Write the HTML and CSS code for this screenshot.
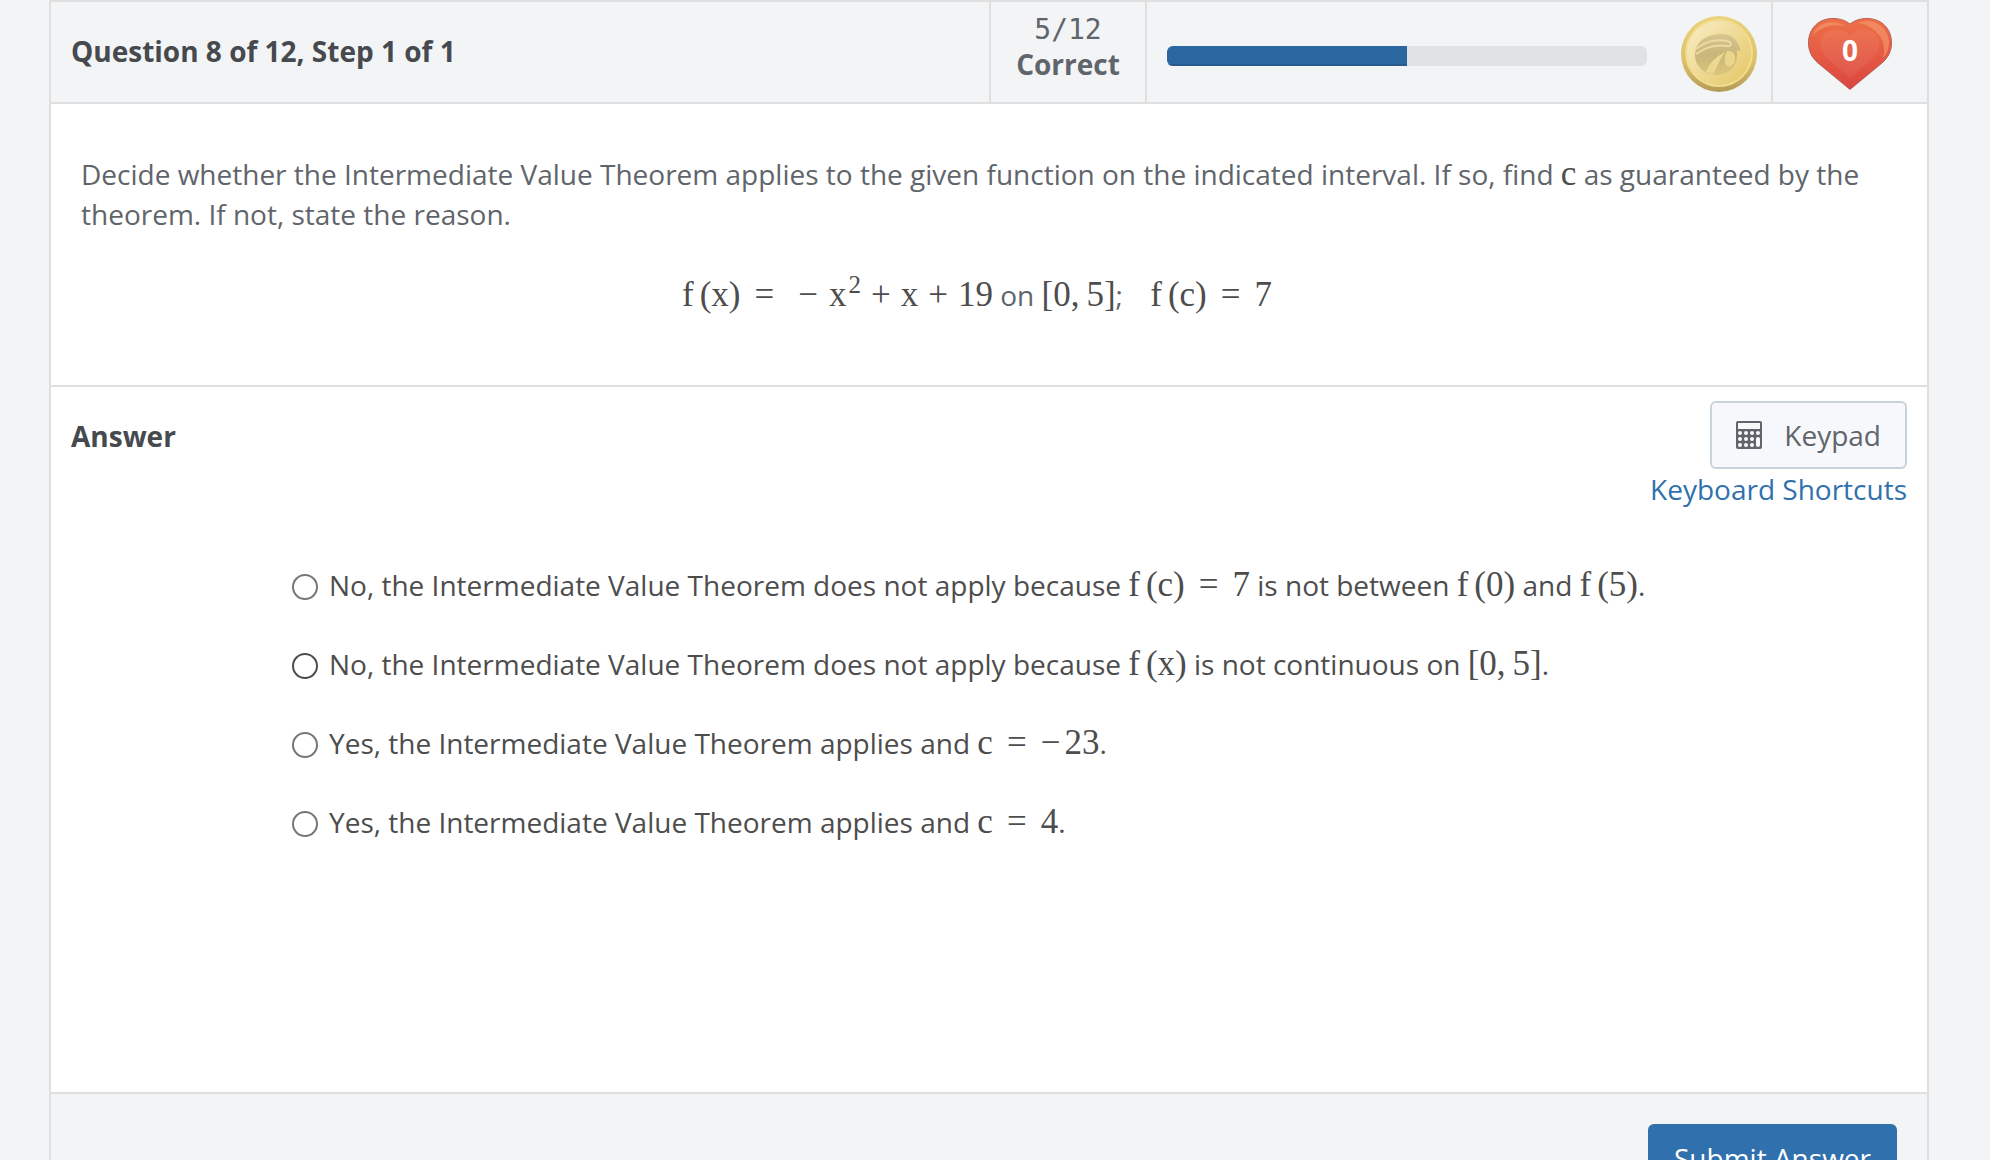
FILE: index.html
```html
<!DOCTYPE html>
<html lang="en">
<head>
    <meta charset="UTF-8">
    <meta name="viewport" content="width=device-width, initial-scale=1.0">
    <title>Question 8 of 12</title>
    <link rel="stylesheet" href="styles.css">
</head>
<body>

<main class="question-card">
    <!-- Header with score, progress and lives -->
    <header class="card-header">
        <h1 class="title">Question 8 of 12, Step 1 of 1</h1>
        <div class="score">
            <span class="score-count">5/12</span>
            <strong>Correct</strong>
        </div>
        <div class="progress-cell">
            <progress class="progress" value="50" max="100" aria-label="Progress"></progress>
            <svg class="coin" viewBox="0 0 76 76" aria-hidden="true">
                <defs>
                    <linearGradient id="coinRim" x1="0" y1="0" x2="0" y2="1">
                        <stop offset="0" stop-color="#ecd27c"/>
                        <stop offset="0.6" stop-color="#dcc06a"/>
                        <stop offset="1" stop-color="#b39c55"/>
                    </linearGradient>
                    <linearGradient id="coinFace" x1="0" y1="0" x2="1" y2="1">
                        <stop offset="0.1" stop-color="#f7eabd"/>
                        <stop offset="0.9" stop-color="#e6ca6c"/>
                    </linearGradient>
                    <linearGradient id="coinBird" x1="0" y1="0" x2="0" y2="1">
                        <stop offset="0" stop-color="#d6c690"/>
                        <stop offset="0.5" stop-color="#c8b67a"/>
                        <stop offset="1" stop-color="#dbc67c"/>
                    </linearGradient>
                </defs>
                <circle cx="38" cy="38" r="38" fill="url(#coinRim)"/>
                <circle cx="38" cy="37" r="34" fill="#f1dc8f"/>
                <circle cx="38" cy="37" r="32" fill="url(#coinFace)"/>
                <path d="M16 30C21 21 31 18 41 18C50 18 57 23 60 36C57 33 55 34 56 38C56 50 48 59 36 59C23 59 13 49 14 37Z" fill="url(#coinBird)"/>
                <path d="M15 33C25 25 35 23 46 25C51 26 51 31 46 30C34 28 25 31 15 38" fill="none" stroke="#ebdba2" stroke-width="2"/>
                <path d="M25 56C29 47 34 41 44 36C39 43 36 51 32 58Z" fill="#ecd98f"/>
                <path d="M46 35C53 34 56 40 53 47C50 52 46 52 44 47C43 42 44 38 46 35Z" fill="#ead58a"/>
            </svg>
        </div>
        <div class="lives">
            <svg class="heart" viewBox="0 0 84 72" aria-hidden="true">
                <defs>
                    <linearGradient id="heartFill" x1="0" y1="0" x2="0" y2="1">
                        <stop offset="0" stop-color="#ee7048"/>
                        <stop offset="1" stop-color="#dc4540"/>
                    </linearGradient>
                </defs>
                <path d="M42 71.500L10 45C3 39 .5 32 .5 25C.5 10 11 .5 25 .5C33 .5 38 3 42 6C46 3 51 .5 59 .5C73 .5 83.500 10 83.500 25C83.500 32 81 39 74 45Z" fill="url(#heartFill)" stroke="#b5615a" stroke-width="1"/>
                <path d="M42 60L18 39C9 29 12 15 23 12C31 10 38 13 42 18C46 13 53 10 61 12C72 15 75 29 66 39Z" fill="#fff" opacity="0.06"/>
                <path d="M50 5C66 -1 80 9 81 24C81 31 79 36 75 40C80 24 69 8 50 5Z" fill="#f6a878" opacity="0.5"/>
                <path d="M4 18C9 4 26 1 37 8C26 6 13 8 4 18Z" fill="#f6a878" opacity="0.5"/>
            </svg>
            <span class="lives-count">0</span>
        </div>
    </header>

    <!-- Question text -->
    <section class="question">
        <p class="question-text">Decide whether the Intermediate Value Theorem applies to the given function on the indicated interval. If so, find <span class="math">c</span> as guaranteed by the theorem. If not, state the reason.</p>
        <p class="formula"><span class="math"><span class="fn">f</span>(x)<span class="rel">=</span><span class="neg">−</span>x<sup>2</sup><span class="bin">+</span>x<span class="bin">+</span>19</span> on <span class="math">[0<span class="comma">,</span>5]</span>; <span class="math next"><span class="fn">f</span>(c)<span class="rel">=</span>7</span></p>
    </section>

    <!-- Answer choices -->
    <section class="answer">
        <div class="answer-head">
            <h2 class="title">Answer</h2>
            <div class="tools">
                <button type="button" class="keypad">
                    <svg class="keypad-icon" viewBox="0 0 26 28" aria-hidden="true">
                        <rect width="26" height="28" rx="2" fill="#5f656b"/>
                        <rect x="2" y="2" width="22" height="6" fill="#f7f8fa"/>
                        <g fill="#f7f8fa">
                            <circle cx="4" cy="12" r="2"/><circle cx="10" cy="12" r="2"/><circle cx="16" cy="12" r="2"/><circle cx="22" cy="12" r="2"/>
                            <circle cx="4" cy="18" r="2"/><circle cx="10" cy="18" r="2"/><circle cx="16" cy="18" r="2"/>
                            <circle cx="4" cy="24" r="2"/><circle cx="10" cy="24" r="2"/><circle cx="16" cy="24" r="2"/>
                            <rect x="20" y="16" width="4" height="10" rx="2"/>
                        </g>
                    </svg>
                    Keypad
                </button>
                <a href="#" class="shortcuts">Keyboard Shortcuts</a>
            </div>
        </div>

        <form class="options" id="answerForm">
            <div class="option">
                <input type="radio" name="answer" id="option1">
                <label for="option1">No, the Intermediate Value Theorem does not apply because <span class="math"><span class="fn">f</span>(c)<span class="rel">=</span>7</span> is not between <span class="math"><span class="fn">f</span>(0)</span> and <span class="math"><span class="fn">f</span>(5)</span>.</label>
            </div>
            <div class="option">
                <input type="radio" name="answer" id="option2" class="focused">
                <label for="option2">No, the Intermediate Value Theorem does not apply because <span class="math"><span class="fn">f</span>(x)</span> is not continuous on <span class="math">[0<span class="comma">,</span>5]</span>.</label>
            </div>
            <div class="option">
                <input type="radio" name="answer" id="option3">
                <label for="option3">Yes, the Intermediate Value Theorem applies and <span class="math">c<span class="rel">=</span><span class="sign">−</span>23</span>.</label>
            </div>
            <div class="option">
                <input type="radio" name="answer" id="option4">
                <label for="option4">Yes, the Intermediate Value Theorem applies and <span class="math">c<span class="rel">=</span>4</span>.</label>
            </div>
        </form>
    </section>

    <footer class="card-footer">
        <button type="submit" form="answerForm" class="submit">Submit Answer</button>
    </footer>
</main>

</body>
</html>
```

FILE: styles.css
```css
* {
    box-sizing: border-box;
}
body {
    margin: 0;
    background-color: #f3f4f6;
    color: #5f656b;
    font-family: 'Open Sans', sans-serif;
    font-size: 28px;
    line-height: 40px;
}
.question-card {
    margin: 0 61px 0 49px;
    border: 2px solid #dfdfdf;
    background-color: #fff;
}
.title {
    margin: 0;
    color: #46494d;
    font-size: 28px;
    font-weight: bold;
}

/* Header */
.card-header {
    display: flex;
    background-color: #f3f4f6;
    border-bottom: 2px solid #dfdfdf;
}
.card-header .title {
    width: 50%;
    padding: 29px 20px 31px;
}
.score {
    display: flex;
    flex-direction: column;
    align-items: center;
    width: 158px;
    padding-top: 11px;
    line-height: 34px;
    border-left: 2px solid #dfdfdf;
    border-right: 2px solid #dfdfdf;
}
.score-count {
    font-family: 'DejaVu Sans Mono', monospace;
}
.progress-cell {
    display: flex;
    flex: 1;
    align-items: center;
    gap: 34px;
    padding: 4px 14px 0 20px;
}
.progress {
    flex: 1;
    width: 0;
    height: 20px;
    margin-top: 4px;
    border: none;
    border-radius: 6px;
    overflow: hidden;
    appearance: none;
}
.progress::-webkit-progress-bar {
    background-color: #e1e2e6;
}
.progress::-webkit-progress-value {
    background-color: #2b68a1;
    box-shadow: inset 0 -2px 0 #275b8e;
}
.coin {
    width: 76px;
    height: 76px;
}
.lives {
    position: relative;
    display: flex;
    align-items: center;
    justify-content: center;
    width: 156px;
    padding-top: 4px;
    border-left: 2px solid #dfdfdf;
}
.heart {
    width: 84px;
    height: 72px;
}
.lives-count {
    position: absolute;
    top: 28px;
    left: 0;
    right: 0;
    color: #fff;
    font-weight: bold;
    text-align: center;
}

/* Question */
.question {
    padding: 50px 30px 70px;
    border-bottom: 2px solid #dfdfdf;
}
.question p {
    margin: 0;
}
.question .formula {
    margin-top: 41px;
    padding-right: 24px;
    text-align: center;
}
.math {
    color: #4d4d4d;
    font-family: 'Liberation Serif', serif;
    font-size: 35px;
    line-height: 34px;
    white-space: nowrap;
}
.math sup {
    margin-left: 2px;
    font-size: 25px;
    line-height: 0;
}
.fn {
    margin-right: 6px;
}
.rel {
    margin: 0 14px;
}
.bin {
    margin: 0 10px;
}
.neg {
    margin: 0 11px 0 10px;
}
.sign {
    margin-right: 4px;
}
.comma {
    margin-right: 7px;
}
.next {
    margin-left: 20px;
}

/* Answer */
.answer {
    min-height: 705px;
    padding: 14px 20px;
}
.answer-head {
    display: flex;
    justify-content: space-between;
}
.answer-head .title {
    padding-top: 15px;
}
.tools {
    display: flex;
    flex-direction: column;
    align-items: flex-end;
}
button {
    font: inherit;
    cursor: pointer;
}
.keypad {
    display: flex;
    align-items: center;
    gap: 22px;
    padding: 12px 24px;
    border: 2px solid #c8d3da;
    border-radius: 6px;
    background-color: #f7f8fb;
    color: #5f656b;
}
.keypad-icon {
    width: 26px;
    height: 28px;
}
.shortcuts {
    color: #3071ad;
    text-decoration: none;
}
.options {
    display: flex;
    flex-direction: column;
    gap: 39px;
    padding: 56px 0 0 221px;
    color: #4d4d4d;
}
.option {
    display: flex;
    align-items: center;
    gap: 11px;
}
.option input {
    flex: none;
    width: 26px;
    height: 26px;
    margin: 4px 0 0;
    border: 2px solid #767676;
    border-radius: 50%;
    background-color: #fff;
    appearance: none;
}
.option input:checked {
    border-width: 8px;
}
.option .focused {
    border-color: #4d4d4d;
}

/* Footer */
.card-footer {
    display: flex;
    justify-content: flex-end;
    padding: 30px;
    border-top: 2px solid #dfdfdf;
    background-color: #f3f4f6;
}
.submit {
    padding: 14px 26px;
    border: none;
    border-radius: 6px;
    background-color: #3071ad;
    color: #fff;
}
```
